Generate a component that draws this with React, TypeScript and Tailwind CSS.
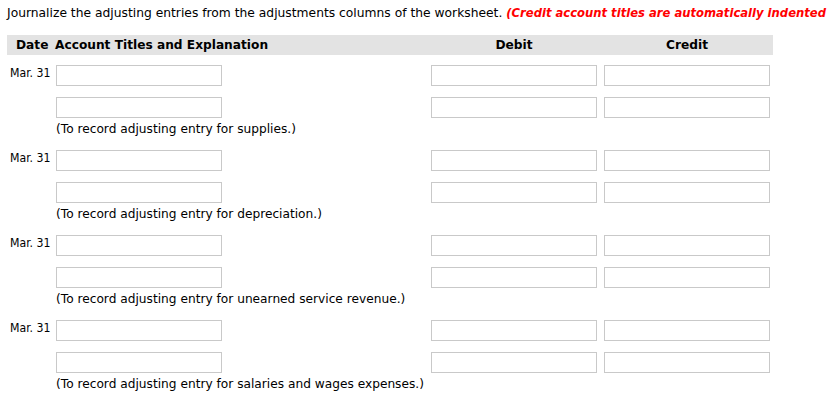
const entries = [
  'To record adjusting entry for supplies.',
  'To record adjusting entry for depreciation.',
  'To record adjusting entry for unearned service revenue.',
  'To record adjusting entry for salaries and wages expenses.',
]

function Field() {
  return <input type="text" className="block w-[166px] h-[21px] border border-[#c9c9c9] bg-white outline-none" />
}

export default function App() {
  return (
    <div className="w-[832px] h-[402px] overflow-hidden bg-white text-black font-['DejaVu_Sans',Verdana,sans-serif] text-[12.2px]">
      <p className="pl-[7px] pt-[5px] leading-[16px] whitespace-nowrap text-[12.3px]">
        Journalize the adjusting entries from the adjustments columns of the worksheet.{' '}
        <span className="text-[#ff0000] font-bold italic text-[11.6px]">(Credit account titles are automatically indented</span>
      </p>

      <div className="ml-[7px] mt-[14px] w-[766px]">
        <div className="grid grid-cols-[48px_376px_173px_169px] h-[20px] leading-[20px] bg-[#e3e3e3] font-bold">
          <div className="pl-[9px]">Date</div>
          <div>Account Titles and Explanation</div>
          <div className="w-[166px] text-center">Debit</div>
          <div className="text-center pr-[3px]">Credit</div>
        </div>

        <div className="pt-[10px]">
          {entries.map(note => (
            <div key={note} className="h-[85px] grid grid-cols-[48px_376px_173px_169px]">
              <div className="pl-[3px] leading-[16px] font-['DejaVu_Sans_Condensed','DejaVu_Sans',sans-serif]">Mar. 31</div>
              <div className="pl-px flex flex-col">
                <Field />
                <div className="mt-[11px]"><Field /></div>
                <p className="mt-[3px] leading-[16px] whitespace-nowrap">({note})</p>
              </div>
              <div className="flex flex-col">
                <Field />
                <div className="mt-[11px]"><Field /></div>
              </div>
              <div className="flex flex-col">
                <Field />
                <div className="mt-[11px]"><Field /></div>
              </div>
            </div>
          ))}
        </div>
      </div>
    </div>
  )
}
